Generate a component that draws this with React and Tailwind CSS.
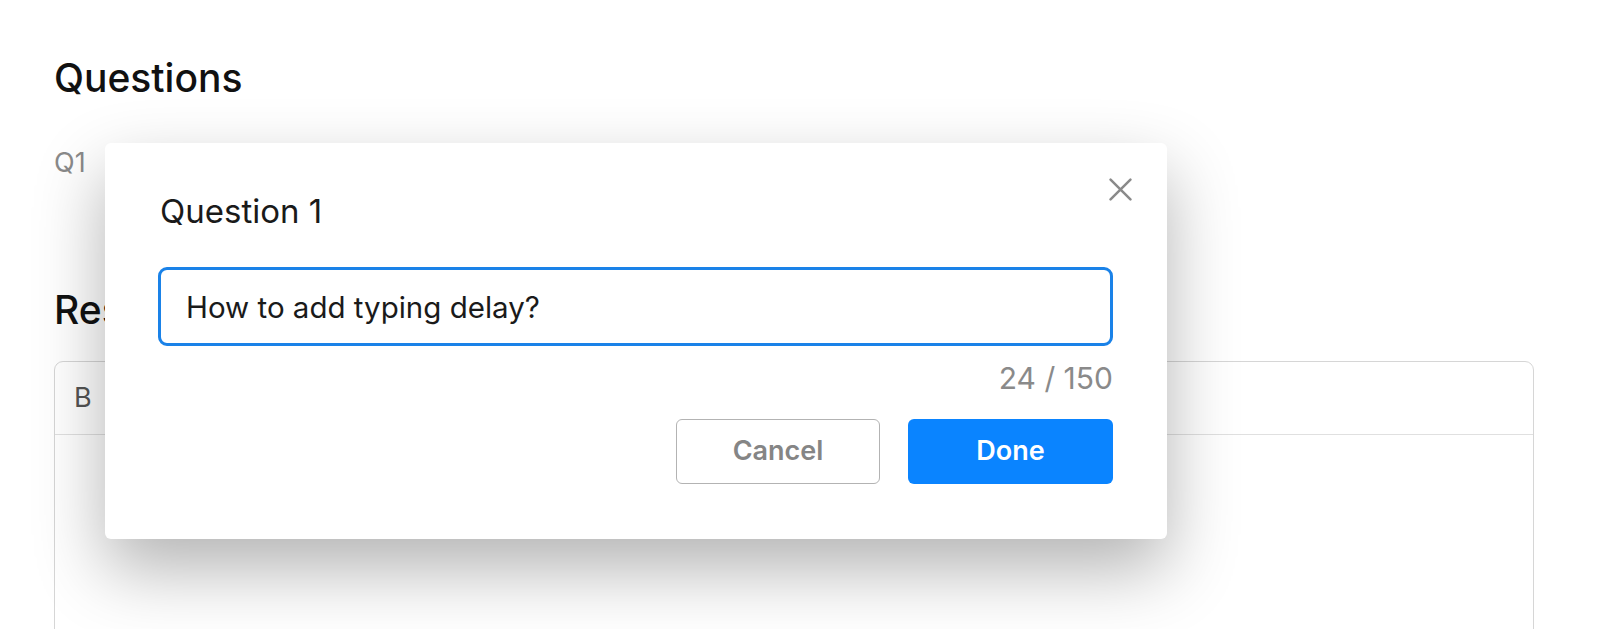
import React, { useState } from 'react'

const font = { fontFamily: 'Inter, "Noto Sans", sans-serif' }

function CloseIcon() {
  return (
    <svg width="23" height="23" viewBox="0 0 22 22" fill="none" stroke="#8a8a8a" strokeWidth="2.4" strokeLinecap="round">
      <path d="M1.5 1.5l19 19M20.5 1.5l-19 19" />
    </svg>
  )
}

function QuestionModal() {
  const [value, setValue] = useState('How to add typing delay?')

  return (
    <div className="absolute left-[105px] top-[143px] w-[1062px] h-[396px] bg-white rounded-[6px] shadow-[0_30px_70px_rgba(0,0,0,0.3)] pl-[53px] pr-[54px] pt-[48px]">
      <button className="absolute right-[35px] top-[35px]">
        <CloseIcon />
      </button>
      <h2 className="text-[33px] leading-[40px] text-[#1a1a1a] ml-[2px]">Question 1</h2>
      <input
        value={value}
        onChange={(e) => setValue(e.target.value)}
        className="mt-[36px] block w-full h-[79px] border-[3px] border-[#1a82e8] rounded-[9px] px-[25px] text-[29.5px] text-[#1a1a1a] outline-none"
        style={font}
      />
      <div className="text-right text-[30px] text-[#8a8a8a] mt-[14px] leading-[36px]">{value.length} / 150</div>
      <div className="flex justify-end gap-[28px] mt-[23px]">
        <button className="w-[204px] h-[65px] border-[1.5px] border-[#b3b3b3] rounded-[6px] text-[27px] font-semibold text-[#858585]">
          Cancel
        </button>
        <button className="w-[205px] h-[65px] bg-[#0a84ff] rounded-[6px] text-[27px] font-semibold text-white">
          Done
        </button>
      </div>
    </div>
  )
}

export default function App() {
  return (
    <div className="relative w-[1600px] h-[629px] overflow-hidden bg-white" style={font}>
      <div className="pl-[54px] pr-[66px] pt-[54px]">
        <h1 className="text-[39px] leading-[48px] font-medium text-[#111]">Questions</h1>
        <div className="mt-[45px] text-[27px] leading-[32px] text-[#8a8a8a]">Q1</div>
        <h1 className="mt-[107px] text-[39px] leading-[48px] font-medium text-[#111]">Responses</h1>
        <div className="mt-[27px] border-[1.5px] border-[#d6d6d6] rounded-[9px] h-[320px]">
          <div className="h-[73px] border-b-[1.5px] border-[#e0e0e0] flex items-center px-[19px]">
            <span className="text-[27px] text-[#555]">B</span>
          </div>
        </div>
      </div>
      <QuestionModal />
    </div>
  )
}
